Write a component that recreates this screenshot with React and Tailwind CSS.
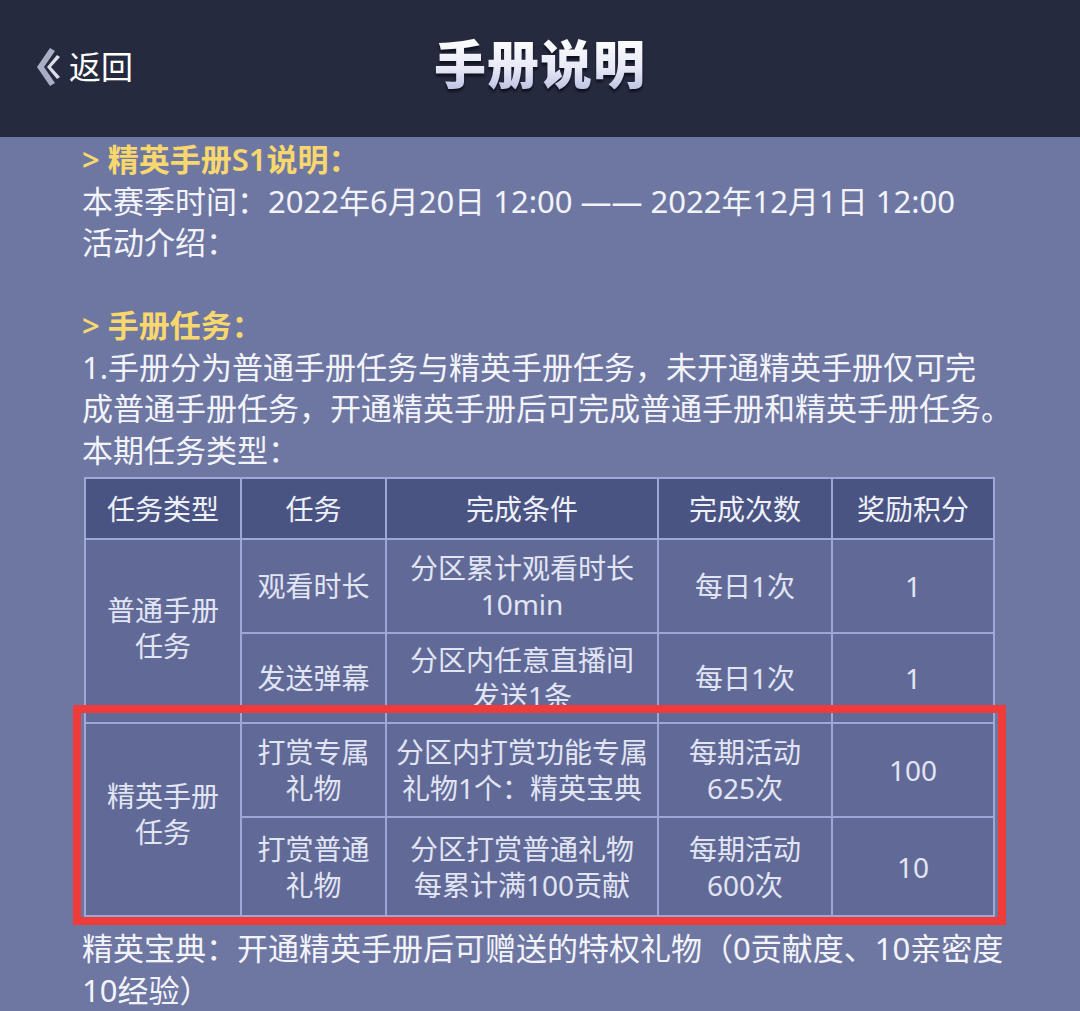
import React from "react";

const FONT = { fontFamily: '"Noto Sans", "Noto Sans CJK SC", sans-serif' };

function Cell({ children, className = "", ...rest }) {
  return (
    <td
      className={`border-2 border-[#9ea8d6] text-center align-middle leading-[36px] ${className}`}
      {...rest}
    >
      {children}
    </td>
  );
}

function Lines({ lines }) {
  return lines.map((l, i) => (
    <div key={i} className="whitespace-nowrap">
      {l}
    </div>
  ));
}

export default function App() {
  return (
    <div className="min-h-[1011px] h-[1011px] overflow-hidden bg-[#6e77a2]" style={FONT}>
      <header className="h-[137px] bg-[#252a3e] grid grid-cols-[1fr_auto_1fr] items-center">
        <div className="flex items-center pl-[36px] pb-[3px]">
          <svg width="24" height="38" viewBox="0 0 24 38" className="mr-[9px]">
            <polygon points="14,0 19,3 8,19 19,35 14,38 1,19" fill="#a9adc6" />
            <polygon points="21,7 24,9 15,19 24,29 21,31 11,19" fill="#dcdeeb" />
          </svg>
          <span className="text-[32px] leading-none text-white">返回</span>
        </div>
        <h1
          className="pb-[10px] text-[52px] font-black leading-none tracking-[1px] bg-linear-to-b from-white via-[#e6e8f6] to-[#aab0d8] bg-clip-text text-transparent drop-shadow-[0_3px_1px_#0f1220]"
        >
          手册说明
        </h1>
        <div />
      </header>

      <main className="pl-[82px] pt-[2px] text-[31px] leading-[41.5px] text-[#f3f4fb]">
        <div className="whitespace-nowrap font-semibold text-[#f7d76e]">&gt; 精英手册S1说明：</div>
        <div className="whitespace-nowrap">本赛季时间：2022年6月20日 12:00 —— 2022年12月1日 12:00</div>
        <div className="whitespace-nowrap">活动介绍：</div>
        <div className="h-[41.5px]" />
        <div className="whitespace-nowrap font-semibold text-[#f7d76e]">&gt; 手册任务：</div>
        <div className="whitespace-nowrap">1.手册分为普通手册任务与精英手册任务，未开通精英手册仅可完</div>
        <div className="whitespace-nowrap">成普通手册任务，开通精英手册后可完成普通手册和精英手册任务。</div>
        <div className="whitespace-nowrap">本期任务类型：</div>

        <div className="relative mt-[6px] ml-[2px] w-[909px]">
          <table className="w-[909px] table-fixed border-collapse text-[28px] text-[#e2e5f4]">
            <colgroup>
              <col className="w-[156px]" />
              <col className="w-[145px]" />
              <col className="w-[272px]" />
              <col className="w-[174px]" />
              <col className="w-[162px]" />
            </colgroup>
            <thead>
              <tr className="h-[61px] bg-[#4a5482] text-[#eef0fa]">
                <Cell>任务类型</Cell>
                <Cell>任务</Cell>
                <Cell>完成条件</Cell>
                <Cell>完成次数</Cell>
                <Cell>奖励积分</Cell>
              </tr>
            </thead>
            <tbody className="bg-[#616a97]">
              <tr className="h-[94px]">
                <Cell rowSpan={2}>
                  <div className="pb-[6px]">
                    <Lines lines={["普通手册", "任务"]} />
                  </div>
                </Cell>
                <Cell>观看时长</Cell>
                <Cell>
                  <Lines lines={["分区累计观看时长", "10min"]} />
                </Cell>
                <Cell>每日1次</Cell>
                <Cell>1</Cell>
              </tr>
              <tr className="h-[90px]">
                <Cell>发送弹幕</Cell>
                <Cell>
                  <Lines lines={["分区内任意直播间", "发送1条"]} />
                </Cell>
                <Cell>每日1次</Cell>
                <Cell>1</Cell>
              </tr>
              <tr className="h-[94px]">
                <Cell rowSpan={2}>
                  <div className="pb-[12px]">
                    <Lines lines={["精英手册", "任务"]} />
                  </div>
                </Cell>
                <Cell>
                  <Lines lines={["打赏专属", "礼物"]} />
                </Cell>
                <Cell>
                  <Lines lines={["分区内打赏功能专属", "礼物1个：精英宝典"]} />
                </Cell>
                <Cell>
                  <Lines lines={["每期活动", "625次"]} />
                </Cell>
                <Cell>100</Cell>
              </tr>
              <tr className="h-[99px]">
                <Cell>
                  <Lines lines={["打赏普通", "礼物"]} />
                </Cell>
                <Cell>
                  <Lines lines={["分区打赏普通礼物", "每累计满100贡献"]} />
                </Cell>
                <Cell>
                  <Lines lines={["每期活动", "600次"]} />
                </Cell>
                <Cell>10</Cell>
              </tr>
            </tbody>
          </table>
          <div className="pointer-events-none absolute left-[-11px] top-[228px] h-[220px] w-[933px] border-[8px] border-[#f03b3b]" />
        </div>

        <div className="mt-[11px] whitespace-nowrap">精英宝典：开通精英手册后可赠送的特权礼物（0贡献度、10亲密度</div>
        <div className="whitespace-nowrap">10经验）</div>
      </main>
    </div>
  );
}
